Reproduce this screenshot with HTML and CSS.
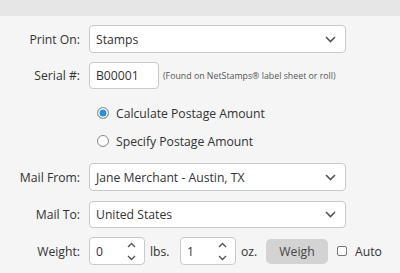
FILE: index.html
```html
<!DOCTYPE html>
<html lang="en">
<head>
  <meta charset="UTF-8">
  <meta name="viewport" content="width=device-width, initial-scale=1.0">
  <title>Postage</title>
  <link rel="stylesheet" href="styles.css">
</head>
<body>
  <div class="topbar"></div>
  <div class="postage-form">
    <div class="row row-print">
      <div class="label">Print On:</div>
      <div class="select">
        <span>Stamps</span>
        <svg class="chevron" width="11" height="7" viewBox="0 0 11 7"><path d="M1 1l4.5 4.5L10 1" fill="none" stroke="#555" stroke-width="1.6"/></svg>
      </div>
    </div>
    <div class="row row-serial">
      <div class="label">Serial #:</div>
      <div class="text-input">B00001</div>
      <div class="hint">(Found on NetStamps&reg; label sheet or roll)</div>
    </div>
    <div class="radio-row radio-first">
      <span class="radio checked"></span>
      <span>Calculate Postage Amount</span>
    </div>
    <div class="radio-row radio-second">
      <span class="radio"></span>
      <span>Specify Postage Amount</span>
    </div>
    <div class="row row-from">
      <div class="label">Mail From:</div>
      <div class="select">
        <span>Jane Merchant - Austin, TX</span>
        <svg class="chevron" width="11" height="7" viewBox="0 0 11 7"><path d="M1 1l4.5 4.5L10 1" fill="none" stroke="#555" stroke-width="1.6"/></svg>
      </div>
    </div>
    <div class="row row-to">
      <div class="label">Mail To:</div>
      <div class="select">
        <span>United States</span>
        <svg class="chevron" width="11" height="7" viewBox="0 0 11 7"><path d="M1 1l4.5 4.5L10 1" fill="none" stroke="#555" stroke-width="1.6"/></svg>
      </div>
    </div>
    <div class="row row-weight">
      <div class="label">Weight:</div>
      <div class="spin">
        <span>0</span>
        <span class="arrows">
          <svg width="9" height="6" viewBox="0 0 9 6"><path d="M1 5l3.5-3.5L8 5" fill="none" stroke="#555" stroke-width="1.4"/></svg>
          <svg width="9" height="6" viewBox="0 0 9 6"><path d="M1 1l3.5 3.5L8 1" fill="none" stroke="#555" stroke-width="1.4"/></svg>
        </span>
      </div>
      <span class="unit unit-lbs">lbs.</span>
      <div class="spin">
        <span>1</span>
        <span class="arrows">
          <svg width="9" height="6" viewBox="0 0 9 6"><path d="M1 5l3.5-3.5L8 5" fill="none" stroke="#555" stroke-width="1.4"/></svg>
          <svg width="9" height="6" viewBox="0 0 9 6"><path d="M1 1l3.5 3.5L8 1" fill="none" stroke="#555" stroke-width="1.4"/></svg>
        </span>
      </div>
      <span class="unit unit-oz">oz.</span>
      <button class="weigh">Weigh</button>
      <span class="checkbox"></span>
      <span class="auto">Auto</span>
    </div>
  </div>
</body>
</html>
```

FILE: styles.css
```css
body {
  margin: 0;
  background-color: #f4f5f4;
  font-family: "Open Sans", "Liberation Sans", sans-serif;
  font-size: 12.2px;
  color: #333;
}

.topbar {
  height: 16px;
  background-color: #e6e6e6;
}

.postage-form {
  display: flex;
  flex-direction: column;
}

.row {
  display: flex;
  align-items: center;
  height: 28px;
}

.row-print {
  margin-top: 9px;
}

.row-serial {
  margin-top: 9px;
  height: 27px;
}

.row-from {
  margin-top: 12px;
}

.row-to {
  margin-top: 10px;
  height: 27px;
}

.row-weight {
  margin-top: 9px;
}

.label {
  width: 80px;
  padding-right: 9px;
  text-align: right;
  flex-shrink: 0;
}

.select {
  box-sizing: border-box;
  width: 257px;
  height: 100%;
  display: flex;
  align-items: center;
  justify-content: space-between;
  padding: 0 9px 0 6px;
  background-color: #fff;
  border: 1px solid #c9c9c9;
  border-radius: 4px;
}

.text-input {
  box-sizing: border-box;
  width: 70px;
  height: 100%;
  display: flex;
  align-items: center;
  padding-left: 6px;
  background-color: #fff;
  border: 1px solid #c9c9c9;
  border-radius: 4px;
}

.hint {
  margin-left: 4px;
  font-size: 8.8px;
  color: #555;
}

.radio-row {
  display: flex;
  align-items: center;
  height: 20px;
  padding-left: 97px;
}

.radio-first {
  margin-top: 14px;
}

.radio-second {
  margin-top: 8px;
}

.radio {
  box-sizing: border-box;
  width: 12px;
  height: 12px;
  border: 1px solid #8a8a8a;
  border-radius: 50%;
  background-color: #fff;
  margin-right: 7px;
}

.radio.checked {
  border-color: #9a9a9a;
  background-color: #2d8fd5;
  box-shadow: inset 0 0 0 1.5px #fff;
}

.spin {
  box-sizing: border-box;
  width: 56px;
  height: 100%;
  display: flex;
  align-items: center;
  justify-content: space-between;
  padding: 0 8px 0 6px;
  background-color: #fff;
  border: 1px solid #c9c9c9;
  border-radius: 4px;
}

.arrows {
  display: flex;
  flex-direction: column;
  gap: 7px;
}

.arrows svg {
  display: block;
}

.unit {
  box-sizing: border-box;
  padding-left: 5px;
}

.unit-lbs {
  width: 35px;
}

.unit-oz {
  width: 30px;
}

.weigh {
  width: 62px;
  height: 25px;
  background-color: #d3d3d3;
  border: none;
  border-radius: 5px;
  font-family: inherit;
  font-size: 12.2px;
  color: #444;
  padding: 0;
}

.checkbox {
  box-sizing: border-box;
  width: 10px;
  height: 10px;
  margin-left: 9px;
  border: 1px solid #777;
  border-radius: 2px;
  background-color: #fff;
}

.auto {
  margin-left: 8px;
}
```
